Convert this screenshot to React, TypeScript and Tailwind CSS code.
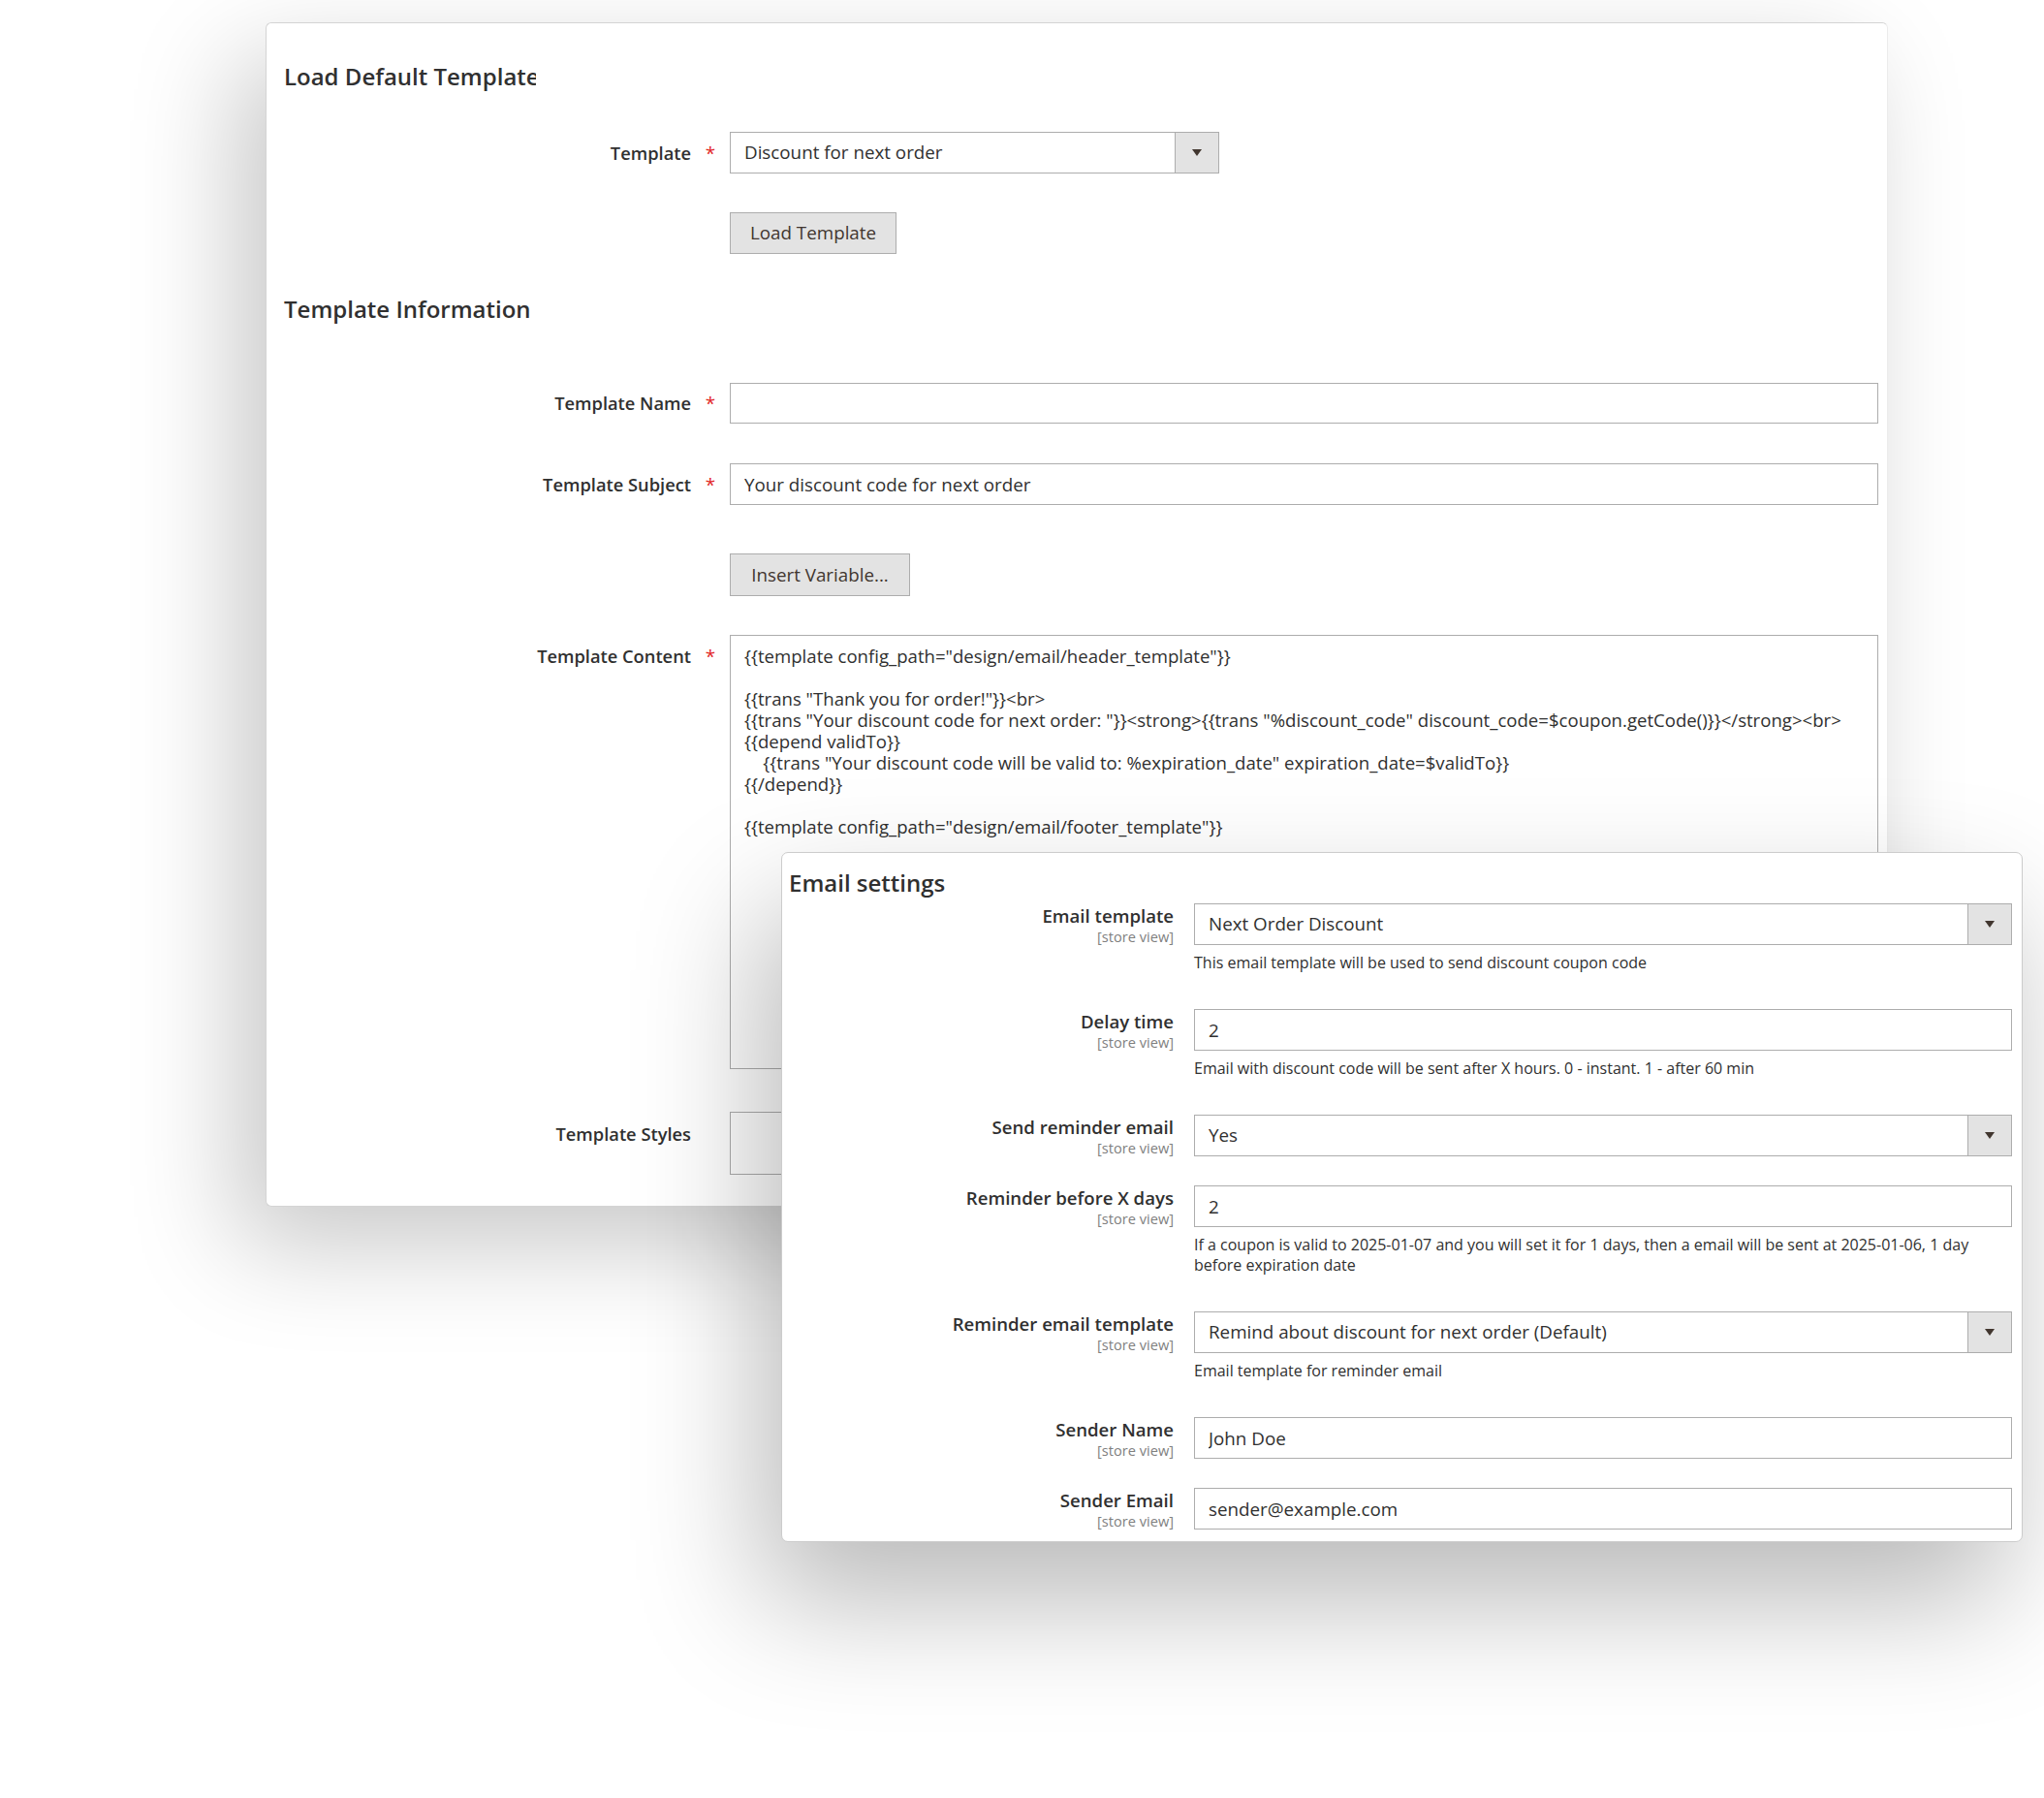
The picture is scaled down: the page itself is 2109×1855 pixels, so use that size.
import React from 'react';

const Arrow = () => (
  <svg width="10" height="7" viewBox="0 0 10 7">
    <path d="M0 0h10L5 7z" fill="#41362f" />
  </svg>
);

const SelectBox = ({ value, className = '' }: { value: string; className?: string }) => (
  <div className={`flex h-[43px] border border-[#adadad] bg-white ${className}`}>
    <div className="flex flex-1 items-center pl-[14px] text-[18.8px] text-[#303030] whitespace-nowrap">{value}</div>
    <div className="flex w-[45px] items-center justify-center border-l border-[#adadad] bg-[#e3e3e3]">
      <Arrow />
    </div>
  </div>
);

const TextInput = ({ value = '' }: { value?: string }) => (
  <input
    readOnly
    defaultValue={value}
    className="h-[43px] w-full border border-[#adadad] bg-white px-[14px] text-[18.8px] text-[#303030] outline-none"
  />
);

const FieldLabel = ({ text, required }: { text: string; required?: boolean }) => (
  <>
    <div className="w-[420px] text-right text-[18.3px] font-semibold text-[#303030] leading-[22px]">{text}</div>
    <div className="w-[40px] text-center text-[18.8px] leading-[22px] text-[#e22626]">{required ? '*' : ''}</div>
  </>
);

const templateContent = `{{template config_path="design/email/header_template"}}

{{trans "Thank you for order!"}}<br>
{{trans "Your discount code for next order: "}}<strong>{{trans "%discount_code" discount_code=$coupon.getCode()}}</strong><br>
{{depend validTo}}
    {{trans "Your discount code will be valid to: %expiration_date" expiration_date=$validTo}}
{{/depend}}

{{template config_path="design/email/footer_template"}}`;

interface SettingRow {
  label: string;
  kind: 'select' | 'input';
  value: string;
  help?: string[];
}

const settings: SettingRow[] = [
  { label: 'Email template', kind: 'select', value: 'Next Order Discount', help: ['This email template will be used to send discount coupon code'] },
  { label: 'Delay time', kind: 'input', value: '2', help: ['Email with discount code will be sent after X hours. 0 - instant. 1 - after 60 min'] },
  { label: 'Send reminder email', kind: 'select', value: 'Yes' },
  {
    label: 'Reminder before X days',
    kind: 'input',
    value: '2',
    help: [
      'If a coupon is valid to 2025-01-07 and you will set it for 1 days, then a email will be sent at 2025-01-06, 1 day',
      'before expiration date',
    ],
  },
  { label: 'Reminder email template', kind: 'select', value: 'Remind about discount for next order (Default)', help: ['Email template for reminder email'] },
  { label: 'Sender Name', kind: 'input', value: 'John Doe' },
  { label: 'Sender Email', kind: 'input', value: 'sender@example.com' },
];

const TemplateCard = () => (
  <div className="absolute left-[274px] top-[23px] h-[1222px] w-[1674px] rounded-[6px] border border-[#d4d4d4] border-r-[#ececec] bg-white pl-[18px] pr-[9px] pt-[40px] shadow-[-30px_40px_110px_rgba(0,0,0,0.22)]">
    {/* the reference crops this heading at its last letter */}
    <div className="w-[260px] overflow-hidden whitespace-nowrap text-[24px] font-semibold leading-[30px] text-[#303030]">
      Load Default Template
    </div>

    <div className="mt-[42px] flex h-[43px] items-center">
      <FieldLabel text="Template" required />
      <SelectBox value="Discount for next order" className="w-[505px]" />
    </div>

    <button className="ml-[460px] mt-[40px] h-[43px] w-[172px] border border-[#adadad] bg-[#e3e3e3] text-[18.8px] font-medium text-[#41362f]">
      Load Template
    </button>

    <div className="mt-[42px] text-[24px] font-semibold leading-[30px] text-[#303030]">Template Information</div>

    <div className="mt-[61px] flex h-[42px] items-center">
      <FieldLabel text="Template Name" required />
      <div className="flex-1">
        <input readOnly className="h-[42px] w-full border border-[#adadad] bg-white px-[14px] text-[18.8px] outline-none" />
      </div>
    </div>

    <div className="mt-[41px] flex h-[43px] items-center">
      <FieldLabel text="Template Subject" required />
      <div className="flex-1">
        <TextInput value="Your discount code for next order" />
      </div>
    </div>

    <button className="ml-[460px] mt-[50px] h-[44px] w-[186px] border border-[#adadad] bg-[#e3e3e3] text-[18.8px] font-medium text-[#41362f]">
      Insert Variable...
    </button>

    <div className="mt-[40px] flex items-start">
      <div className="flex pt-[11px]">
        <FieldLabel text="Template Content" required />
      </div>
      <div className="h-[448px] flex-1 overflow-hidden whitespace-pre border border-[#adadad] bg-white px-[14px] pt-[10px] text-[18.6px] leading-[22px] text-[#303030]">
        {templateContent}
      </div>
    </div>

    <div className="mt-[44px] flex items-start">
      <div className="flex pt-[12px]">
        <FieldLabel text="Template Styles" />
      </div>
      <div className="h-[65px] flex-1 border border-[#adadad] bg-white" />
    </div>
  </div>
);

const EmailSettingsCard = () => (
  <div className="absolute left-[806px] top-[879px] h-[712px] w-[1281px] rounded-[7px] border border-[#cccccc] bg-white pl-[7px] pr-[10px] pt-[16px] shadow-[-20px_60px_130px_rgba(0,0,0,0.28)]">
    <div className="text-[24px] font-semibold leading-[30px] text-[#303030]">Email settings</div>
    <div className="mt-[6px]">
      {settings.map((row) => (
        <div key={row.label} className="mb-[30px] flex items-start">
          <div className="flex w-[397px] flex-col items-end pt-[2px]">
            <div className="text-[18.6px] font-semibold leading-[22px] text-[#303030]">{row.label}</div>
            <div className="mt-[2px] text-[14.6px] leading-[16px] text-[#808080]">[store view]</div>
          </div>
          <div className="ml-[21px] flex-1">
            {row.kind === 'select' ? <SelectBox value={row.value} /> : <TextInput value={row.value} />}
            {row.help && (
              <div className="mt-[8px] pb-[7px] text-[16px] leading-[21px] text-[#303030]">
                {row.help.map((line) => (
                  <div key={line} className="whitespace-nowrap">
                    {line}
                  </div>
                ))}
              </div>
            )}
          </div>
        </div>
      ))}
    </div>
  </div>
);

export default function App() {
  return (
    <div className="relative h-[1855px] w-[2109px] overflow-hidden bg-white font-['Open_Sans',sans-serif]">
      <TemplateCard />
      <EmailSettingsCard />
    </div>
  );
}
